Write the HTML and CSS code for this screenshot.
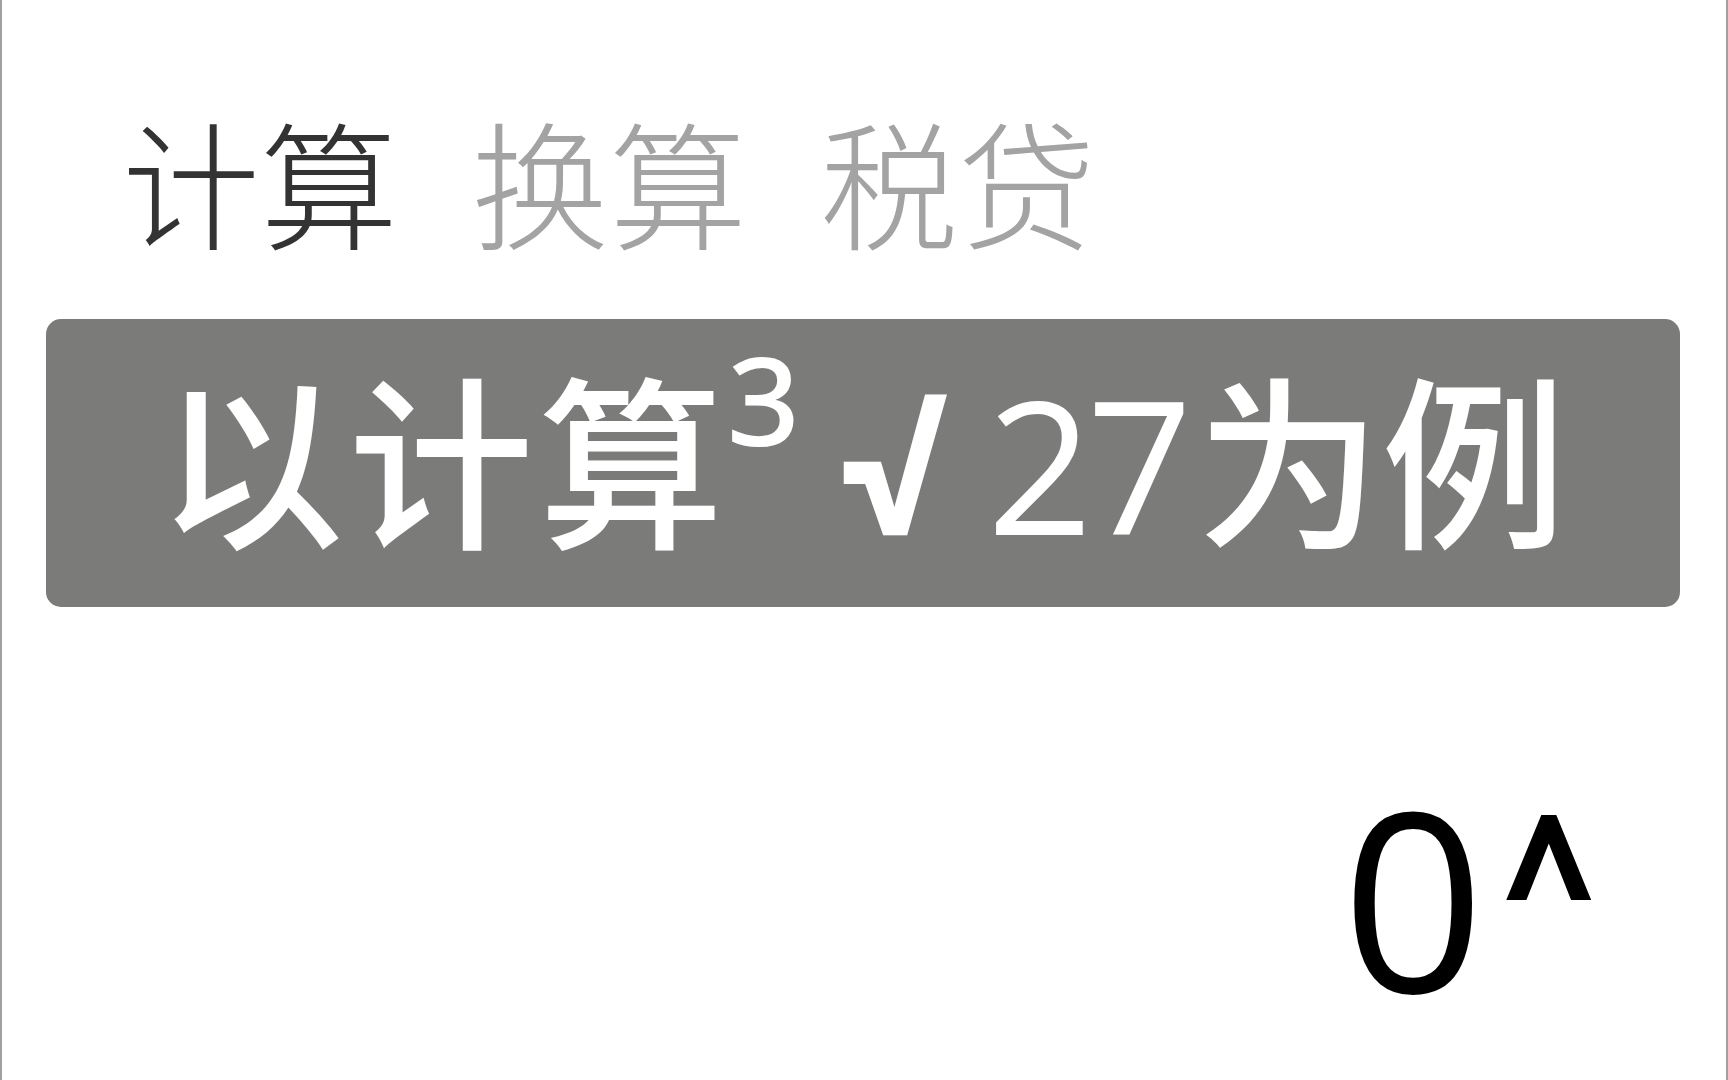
FILE: index.html
```html
<!DOCTYPE html>
<html lang="zh-CN">
<head>
<meta charset="utf-8">
<title>计算</title>
<link rel="stylesheet" href="styles.css">
</head>
<body>
<div class="page">
  <nav class="tabs">
    <span class="tab active">计算</span>
    <span class="tab">换算</span>
    <span class="tab">税贷</span>
  </nav>
  <div class="banner"><span class="banner-text"><span class="lead">以计算</span><span class="sup">³</span> <span class="radical">√</span> <span class="num">27</span>为例</span></div>
  <div class="display"><span class="value">0<span class="caret">^</span></span></div>
</div>
</body>
</html>
```

FILE: styles.css
```css
html, body {
  margin: 0;
  padding: 0;
  background: #ffffff;
}

.page {
  height: 1080px;
  box-sizing: border-box;
  border-left: 2px solid #a0a0a0;
  border-right: 2px solid #a0a0a0;
  padding: 0 46px 0 44px;
  overflow: hidden;
  font-family: "Noto Sans CJK SC", "Noto Sans", sans-serif;
}

.tabs {
  display: flex;
  gap: 73px;
  padding-top: 110px;
  padding-left: 76px;
  font-size: 138px;
  line-height: 138px;
  font-weight: 300;
}

.tab {
  color: #a3a3a3;
}

.tab.active {
  color: #333333;
}

.banner {
  margin-top: 71px;
  height: 288px;
  box-sizing: border-box;
  background: #7b7c7a;
  border-radius: 15px;
  display: flex;
  align-items: center;
  justify-content: center;
}

.banner-text {
  color: #ffffff;
  font-family: "Open Sans", "Noto Sans CJK SC", sans-serif;
  font-size: 185px;
  line-height: 185px;
  font-weight: 500;
  white-space: pre;
  margin-left: -1px;
}

.lead {
  letter-spacing: 5px;
}

.sup {
  font-size: 1.1em;
  line-height: 0;
  vertical-align: 5px;
  margin-right: -9px;
}

.radical {
  font-family: Roboto, "DejaVu Sans", sans-serif;
  font-weight: 700;
  font-size: 1.07em;
  line-height: 0;
  margin-right: -10px;
}

.num {
  letter-spacing: -6px;
  margin-right: 10px;
}

.display {
  display: flex;
  justify-content: flex-end;
  padding-top: 164px;
  padding-right: 81px;
}

.value {
  font-family: "Open Sans", Roboto, sans-serif;
  font-size: 250px;
  line-height: 250px;
  color: #000000;
}

.caret {
  font-family: Roboto, sans-serif;
  font-size: 240px;
  margin-left: 14px;
  vertical-align: 8px;
}
```
